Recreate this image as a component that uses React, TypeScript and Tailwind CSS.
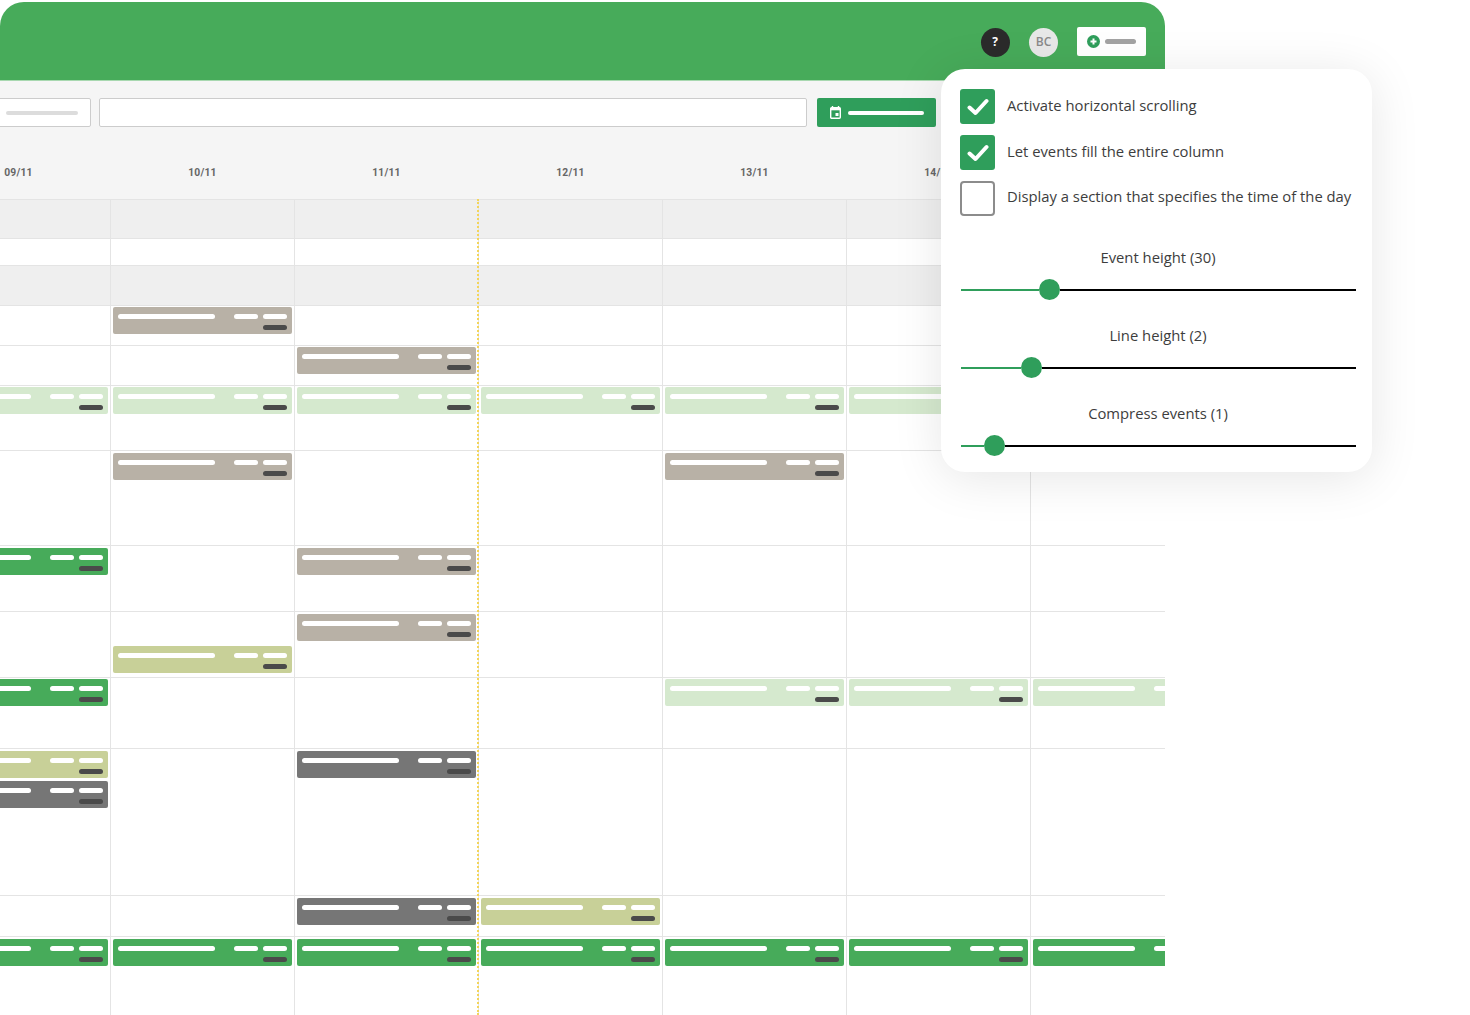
type EventColor = 'green' | 'light' | 'brown' | 'olive' | 'grey'

type CalEvent = {
  col: number
  color: EventColor
  offset?: string
}

type Row = {
  height: string
  band?: boolean
  events?: CalEvent[]
}

const colorClasses: Record<EventColor, string> = {
  green: 'bg-[#47ab5a]',
  light: 'bg-[#d5e9ce]',
  brown: 'bg-[#b8b1a6]',
  olive: 'bg-[#c8d098]',
  grey: 'bg-[#767676]',
}

const dates = ['09/11', '10/11', '11/11', '12/11', '13/11', '14/11']
const columns = [0, 1, 2, 3, 4, 5, 6]

const rows: Row[] = [
  { height: 'h-[39px]', band: true },
  { height: 'h-[27px]' },
  { height: 'h-[40px]', band: true },
  { height: 'h-[40px]', events: [{ col: 1, color: 'brown' }] },
  { height: 'h-[40px]', events: [{ col: 2, color: 'brown' }] },
  { height: 'h-[65px]', events: columns.map((col) => ({ col, color: 'light' as EventColor })) },
  {
    height: 'h-[95px]',
    events: [
      { col: 1, color: 'brown', offset: 'mt-[2px]' },
      { col: 4, color: 'brown', offset: 'mt-[2px]' },
    ],
  },
  {
    height: 'h-[66px]',
    events: [
      { col: 0, color: 'green', offset: 'mt-[2px]' },
      { col: 2, color: 'brown', offset: 'mt-[2px]' },
    ],
  },
  {
    height: 'h-[66px]',
    events: [
      { col: 1, color: 'olive', offset: 'mt-[34px]' },
      { col: 2, color: 'brown', offset: 'mt-[2px]' },
    ],
  },
  {
    height: 'h-[71px]',
    events: [
      { col: 0, color: 'green', offset: 'mt-[1px]' },
      { col: 4, color: 'light', offset: 'mt-[1px]' },
      { col: 5, color: 'light', offset: 'mt-[1px]' },
      { col: 6, color: 'light', offset: 'mt-[1px]' },
    ],
  },
  {
    height: 'h-[147px]',
    events: [
      { col: 0, color: 'olive', offset: 'mt-[2px]' },
      { col: 0, color: 'grey', offset: 'mt-[3px]' },
      { col: 2, color: 'grey', offset: 'mt-[2px]' },
    ],
  },
  {
    height: 'h-[41px]',
    events: [
      { col: 2, color: 'grey', offset: 'mt-[2px]' },
      { col: 3, color: 'olive', offset: 'mt-[2px]' },
    ],
  },
  { height: 'h-[79px]', events: columns.map((col) => ({ col, color: 'green' as EventColor, offset: 'mt-[2px]' })) },
]

function EventBar({ color, offset }: { color: EventColor; offset?: string }) {
  return (
    <div className={`${colorClasses[color]} ${offset ?? 'mt-[1px]'} ml-[2px] h-[27px] w-[179px] shrink-0 rounded-[2px] px-[5px] pt-[7px]`}>
      <div className="flex">
        <div className="h-[5px] w-[97px] rounded-full bg-white" />
        <div className="ml-[19px] h-[5px] w-[24px] rounded-full bg-white" />
        <div className="ml-[5px] h-[5px] w-[24px] rounded-full bg-white" />
      </div>
      <div className="mt-[6px] ml-auto h-[5px] w-[24px] rounded-full bg-[#4a4a4a]" />
    </div>
  )
}

function CheckOption({ checked, label }: { checked: boolean; label: string }) {
  return (
    <div className="flex items-center gap-[12px]">
      {checked ? (
        <div className="flex h-[35px] w-[35px] items-center justify-center rounded-[3px] bg-[#2f9e5b]">
          <svg width="22" height="18" viewBox="0 0 22 18" fill="none">
            <path d="M2.5 9.5 L8.5 15 L19.5 3" stroke="white" strokeWidth="4" strokeLinecap="round" strokeLinejoin="round" />
          </svg>
        </div>
      ) : (
        <div className="h-[35px] w-[35px] rounded-[4px] border-2 border-[#8c8c8c] bg-white" />
      )}
      <span className={`${checked ? '-mt-[2px]' : '-mt-[4px]'} text-[14.8px] text-[#3d3d3d]`}>{label}</span>
    </div>
  )
}

function Slider({ label, fill }: { label: string; fill: string }) {
  return (
    <div>
      <div className="text-center text-[14.8px] leading-[20px] text-[#3d3d3d]">{label}</div>
      <div className="mt-[12px] ml-[1px] flex items-center">
        <div className={`${fill} h-[2px] bg-[#2f9e5b]`} />
        <div className="h-[21px] w-[21px] rounded-full bg-[#2f9e5b]" />
        <div className="h-[2px] flex-1 bg-black" />
      </div>
    </div>
  )
}

export default function App() {
  return (
    <div className="relative h-[1015px] w-[1470px] overflow-hidden bg-white font-['Open_Sans',sans-serif]">
      <div className="mt-[2px] w-[1165px] overflow-hidden rounded-t-[24px]">
        <header className="flex h-[78px] items-center justify-end gap-[19px] bg-[#47ab5a] pt-[2px] pr-[19px]">
          <div className="flex h-[29px] w-[29px] items-center justify-center rounded-full bg-[#2b2b2b] pr-[1px] text-[12px] font-bold text-white">?</div>
          <div className="flex h-[29px] w-[29px] items-center justify-center rounded-full bg-[#e8e8e8] text-[12px] font-semibold text-[#8a8a8a]">BC</div>
          <div className="-mt-[1px] flex h-[29px] w-[69px] items-center gap-[5px] rounded-[2px] bg-white pl-[10px]">
            <svg width="13" height="13" viewBox="0 0 13 13">
              <circle cx="6.5" cy="6.5" r="6.5" fill="#2f9e5b" />
              <path d="M6.5 3.5 V9.5 M3.5 6.5 H9.5" stroke="white" strokeWidth="2" />
            </svg>
            <div className="h-[5px] w-[31px] rounded-full bg-[#a3a3a3]" />
          </div>
        </header>

        <div className="h-[119px] border-t border-[#a8d8b0] bg-[#f5f5f5]">
          <div className="flex items-center pt-[17px]">
            <div className="ml-[-29px] flex h-[29px] w-[120px] items-center justify-end rounded-[2px] border border-[#cccccc] bg-white pr-[12px]">
              <div className="h-[4px] w-[72px] rounded-full bg-[#dcdcdc]" />
            </div>
            <div className="ml-[8px] h-[29px] w-[708px] rounded-[2px] border border-[#cccccc] bg-white" />
            <div className="ml-[10px] flex h-[29px] w-[119px] items-center gap-[7px] rounded-[2px] bg-[#2f9e5b] pl-[13px]">
              <svg width="11" height="13" viewBox="0 0 11 13" fill="none">
                <path d="M2.5 0 V2 M8.5 0 V2" stroke="white" strokeWidth="1.4" />
                <rect x="0.7" y="1.7" width="9.6" height="10.6" rx="1" stroke="white" strokeWidth="1.4" />
                <rect x="0.7" y="1.7" width="9.6" height="2.6" fill="white" />
                <rect x="5.5" y="7" width="3" height="3" fill="white" />
              </svg>
              <div className="h-[4px] w-[76px] rounded-full bg-white" />
            </div>
          </div>
          <div className="mt-[38px] ml-[-74px] grid grid-cols-[repeat(7,184px)]">
            {dates.map((date) => (
              <div key={date} className="pl-[1px] text-center font-['Roboto',sans-serif] text-[10.3px] leading-[16px] font-bold tracking-[0.2px] text-[#666666]">
                {date}
              </div>
            ))}
          </div>
        </div>

        <div className="relative">
          {rows.map((row, rowIndex) => (
            <div
              key={rowIndex}
              className={`${row.height} ${row.band ? 'bg-[#efefef]' : 'bg-white'} ml-[-73px] grid grid-cols-[repeat(7,184px)] border-t border-[#e4e4e4]`}
            >
              {columns.map((col) => (
                <div key={col} className="flex flex-col border-r border-[#e4e4e4]">
                  {row.events
                    ?.filter((event) => event.col === col)
                    .map((event, eventIndex) => (
                      <EventBar key={eventIndex} color={event.color} offset={event.offset} />
                    ))}
                </div>
              ))}
            </div>
          ))}
          <div className="absolute inset-y-0 left-[477px] border-l-2 border-dotted border-[#f3d55b]" />
        </div>
      </div>

      <div className="absolute top-[69px] left-[941px] w-[431px] rounded-[24px] bg-white pt-[20px] pr-[16px] pb-[16px] pl-[19px] shadow-[0_6px_50px_rgba(0,0,0,0.1)]">
        <div className="flex flex-col gap-[11px]">
          <CheckOption checked label="Activate horizontal scrolling" />
          <CheckOption checked label="Let events fill the entire column" />
          <CheckOption checked={false} label="Display a section that specifies the time of the day" />
        </div>
        <div className="mt-[31px] flex flex-col gap-[25px]">
          <Slider label="Event height (30)" fill="w-[78px]" />
          <Slider label="Line height (2)" fill="w-[60px]" />
          <Slider label="Compress events (1)" fill="w-[23px]" />
        </div>
      </div>
    </div>
  )
}
